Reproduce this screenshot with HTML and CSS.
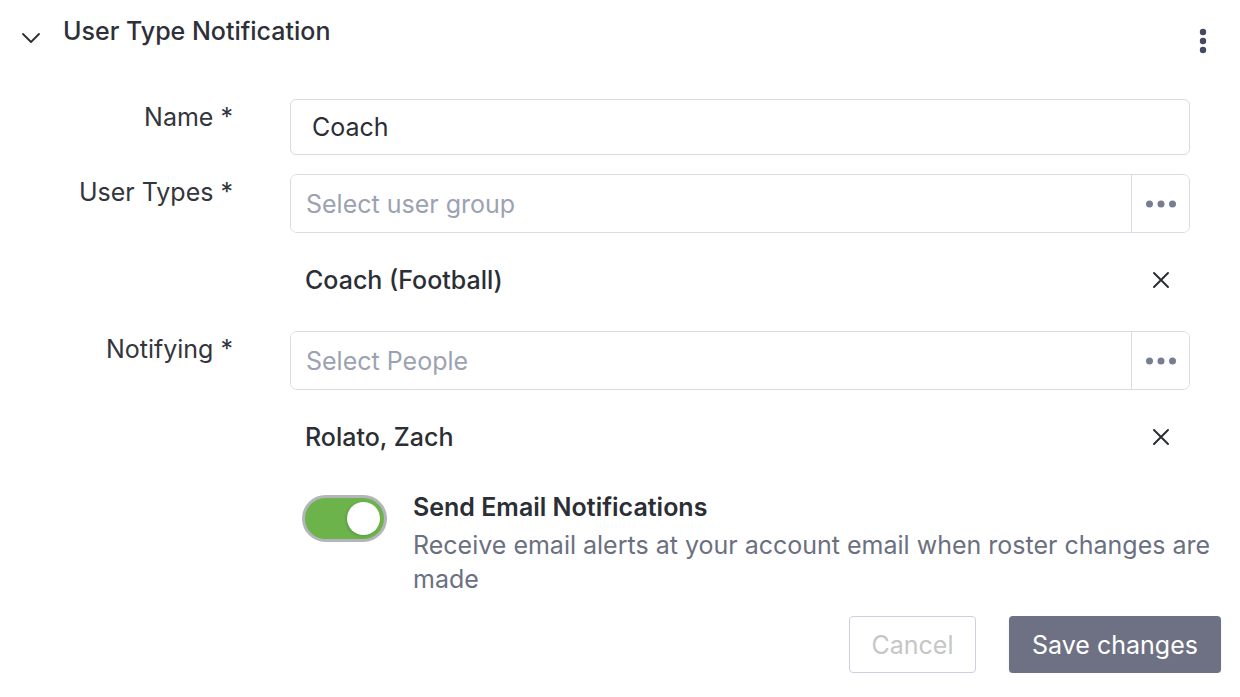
FILE: index.html
```html
<!DOCTYPE html>
<html>
<head>
    <title>User Type Notification</title>
    <link rel="stylesheet" href="styles.css">
</head>
<body>
    <div class="panel">
        <div class="panel-header">
            <div class="header-left">
                <svg class="chevron" width="20" height="12" viewBox="0 0 20 12">
                    <path d="M2 2 L10 10 L18 2" fill="none" stroke="#2b2e34" stroke-width="1.8" stroke-linecap="round" stroke-linejoin="round"/>
                </svg>
                <h1 class="panel-title">User Type Notification</h1>
            </div>
            <svg class="kebab" width="8" height="26" viewBox="0 0 8 26">
                <circle cx="4" cy="4" r="3.2" fill="#454a63"/>
                <circle cx="4" cy="13" r="3.2" fill="#454a63"/>
                <circle cx="4" cy="22" r="3.2" fill="#454a63"/>
            </svg>
        </div>

        <form class="form">
            <div class="row">
                <label class="label" for="name">Name *</label>
                <div class="field">
                    <input class="text-input" id="name" type="text" value="Coach">
                </div>
            </div>

            <div class="row">
                <label class="label" for="user_types">User Types *</label>
                <div class="field">
                    <div class="picker">
                        <input class="picker-input" id="user_types" type="text" placeholder="Select user group">
                        <button type="button" class="picker-button">
                            <svg width="30" height="8" viewBox="0 0 30 8">
                                <circle cx="3.5" cy="4" r="3.5" fill="#787d92"/>
                                <circle cx="15" cy="4" r="3.5" fill="#787d92"/>
                                <circle cx="26.5" cy="4" r="3.5" fill="#787d92"/>
                            </svg>
                        </button>
                    </div>
                    <div class="chip">
                        <span class="chip-name">Coach (Football)</span>
                        <span class="chip-remove">
                            <svg width="18" height="18" viewBox="0 0 18 18">
                                <path d="M2 2 L16 16 M16 2 L2 16" stroke="#2b2e34" stroke-width="2" stroke-linecap="round"/>
                            </svg>
                        </span>
                    </div>
                </div>
            </div>

            <div class="row">
                <label class="label" for="notifying">Notifying *</label>
                <div class="field">
                    <div class="picker">
                        <input class="picker-input" id="notifying" type="text" placeholder="Select People">
                        <button type="button" class="picker-button">
                            <svg width="30" height="8" viewBox="0 0 30 8">
                                <circle cx="3.5" cy="4" r="3.5" fill="#787d92"/>
                                <circle cx="15" cy="4" r="3.5" fill="#787d92"/>
                                <circle cx="26.5" cy="4" r="3.5" fill="#787d92"/>
                            </svg>
                        </button>
                    </div>
                    <div class="chip">
                        <span class="chip-name">Rolato, Zach</span>
                        <span class="chip-remove">
                            <svg width="18" height="18" viewBox="0 0 18 18">
                                <path d="M2 2 L16 16 M16 2 L2 16" stroke="#2b2e34" stroke-width="2" stroke-linecap="round"/>
                            </svg>
                        </span>
                    </div>
                </div>
            </div>

            <div class="toggle-row">
                <div class="toggle">
                    <span class="toggle-knob"></span>
                </div>
                <div class="toggle-text">
                    <div class="toggle-title">Send Email Notifications</div>
                    <div class="toggle-desc">Receive email alerts at your account email when roster changes are made</div>
                </div>
            </div>

            <div class="actions">
                <button type="button" class="btn btn-cancel" disabled>Cancel</button>
                <button type="submit" class="btn btn-save">Save changes</button>
            </div>
        </form>
    </div>
</body>
</html>
```

FILE: styles.css
```css
body {
    margin: 0;
    background: #fff;
    font-family: Inter, "Noto Sans", sans-serif;
    color: #2f3239;
}
.panel {
    width: 1240px;
}
.panel-header {
    display: flex;
    justify-content: space-between;
    align-items: flex-start;
    padding: 16px 33px 0 21px;
    height: 83px;
    box-sizing: border-box;
}
.header-left {
    display: flex;
    align-items: center;
}
.chevron {
    margin-top: 14px;
    margin-right: 22px;
}
.panel-title {
    margin: 0;
    font-size: 25px;
    font-weight: 500;
    line-height: 30px;
    color: #2d3038;
}
.kebab {
    margin-top: 12px;
}
.form {
    display: flex;
    flex-direction: column;
}
.row {
    display: grid;
    grid-template-columns: 233px 900px;
    column-gap: 57px;
    margin-top: 19px;
}
.row:first-child {
    margin-top: 16px;
}
.label {
    text-align: right;
    font-size: 25px;
    line-height: 30px;
    padding-top: 3px;
    color: #33363d;
}
.text-input {
    box-sizing: border-box;
    width: 100%;
    height: 56px;
    border: 1px solid #d9dbe2;
    border-radius: 6px;
    padding: 0 21px;
    font-family: inherit;
    font-size: 25px;
    color: #2b2e34;
    outline: none;
}
.picker {
    display: flex;
    height: 59px;
    box-sizing: border-box;
    border: 1px solid #d9dbe2;
    border-radius: 7px;
    overflow: hidden;
}
.picker-input {
    flex: 1;
    border: none;
    padding: 0 15px;
    font-family: inherit;
    font-size: 25px;
    color: #2b2e34;
    outline: none;
}
.picker-input::placeholder {
    color: #9ca2b2;
}
.picker-button {
    width: 58px;
    border: none;
    border-left: 1px solid #d9dbe2;
    background: #fff;
    display: flex;
    align-items: center;
    justify-content: center;
    padding: 0;
}
.chip {
    display: flex;
    justify-content: space-between;
    align-items: center;
    padding: 32px 20px 17px 15px;
    font-size: 25px;
    line-height: 30px;
    font-weight: 500;
    color: #2b2e34;
}
.chip-remove {
    display: flex;
    width: 18px;
    height: 18px;
}
.toggle-row {
    display: flex;
    align-items: flex-start;
    margin-top: 21px;
    padding-left: 302px;
    padding-right: 10px;
}
.toggle {
    box-sizing: border-box;
    width: 85px;
    height: 47px;
    border: 3px solid #b3b5bb;
    border-radius: 24px;
    background: #6bb34a;
    display: flex;
    align-items: center;
    justify-content: flex-end;
    padding-right: 4px;
    margin-top: 5px;
    flex-shrink: 0;
}
.toggle-knob {
    width: 33px;
    height: 33px;
    border-radius: 50%;
    background: #fff;
    box-shadow: -1px 1px 3px rgba(0, 0, 0, 0.15);
}
.toggle-text {
    margin-left: 26px;
    font-size: 25px;
    line-height: 34px;
}
.toggle-title {
    font-weight: 600;
    color: #2b2e34;
}
.toggle-desc {
    margin-top: 4px;
    color: #6b7081;
}
.actions {
    display: flex;
    justify-content: flex-end;
    gap: 33px;
    padding-right: 19px;
    margin-top: 20px;
}
.btn {
    height: 57px;
    border-radius: 4px;
    font-family: inherit;
    font-size: 25px;
    padding: 0 20px;
}
.btn-cancel {
    width: 127px;
    background: #fff;
    border: 1px solid #cfd0de;
    color: #c6c6c6;
}
.btn-save {
    width: 212px;
    background: #6e7183;
    border: none;
    color: #fff;
    box-shadow: 0 2px 3px rgba(0, 0, 0, 0.08);
}
```
